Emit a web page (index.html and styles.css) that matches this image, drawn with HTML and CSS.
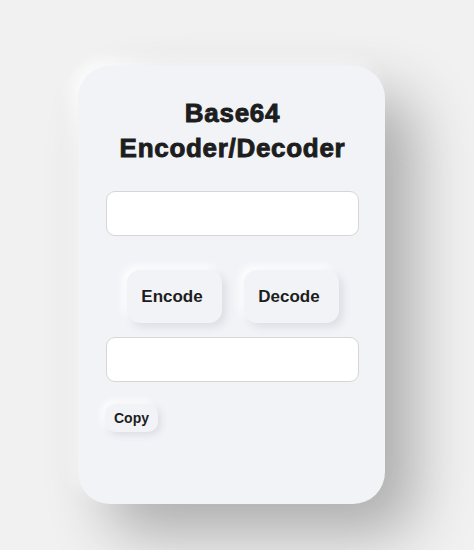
FILE: index.html
```html
<!DOCTYPE html>
<html>
<head>
<meta charset="utf-8">
<link rel="stylesheet" href="styles.css">
</head>
<body>
<div class="card">
  <h1 class="title">Base64<br>Encoder/Decoder</h1>
  <input class="field" type="text">
  <div class="actions">
    <button class="btn">Encode</button>
    <button class="btn">Decode</button>
  </div>
  <input class="field" type="text">
  <div class="copy-row">
    <button class="btn-copy">Copy</button>
  </div>
</div>
</body>
</html>
```
FILE: styles.css
```css
html, body {
  margin: 0;
  padding: 0;
}
body {
  background: #f1f1f1;
  font-family: "Liberation Sans", Arial, sans-serif;
  width: 474px;
  height: 550px;
  overflow: hidden;
}
.card {
  box-sizing: border-box;
  width: 307px;
  height: 438px;
  margin: 66px 0 0 78px;
  padding: 30px 26px 0 28px;
  background: #f2f3f7;
  border-radius: 32px;
  box-shadow: 30px 30px 60px #acacac, -6px -6px 16px #ffffff;
  display: flex;
  flex-direction: column;
}
.title {
  margin: 0;
  text-align: center;
  font-size: 26px;
  line-height: 35px;
  font-weight: 700;
  letter-spacing: 0.7px;
  -webkit-text-stroke: 0.9px #1d1d1d;
  color: #1d1d1d;
}
.field {
  box-sizing: border-box;
  width: 253px;
  height: 45px;
  margin: 25px 0 0 0;
  border: 1px solid #d6d6d6;
  border-radius: 9px;
  background: #ffffff;
  outline: none;
  padding: 0 10px;
}
.actions {
  display: flex;
  justify-content: center;
  gap: 22px;
  margin: 34px 0 14px 0;
}
.actions + .field {
  margin-top: 0;
}
.btn {
  width: 95px;
  height: 53px;
  border: none;
  border-radius: 13px;
  background: #f2f3f7;
  font-family: "Liberation Sans", Arial, sans-serif;
  font-size: 17px;
  font-weight: 700;
  color: #1d1d1d;
  box-shadow: 4px 4px 9px #dcdde3, -4px -4px 9px #ffffff;
  padding: 0 4px 0 0;
}
.copy-row {
  display: flex;
  margin-top: 22px;
}
.btn-copy {
  margin-left: -1px;
  width: 53px;
  height: 28px;
  border: none;
  border-radius: 10px;
  background: #f2f3f7;
  font-family: "Liberation Sans", Arial, sans-serif;
  font-size: 14px;
  font-weight: 700;
  color: #1d1d1d;
  box-shadow: 3px 3px 7px #dcdde3, -3px -3px 7px #ffffff;
  padding: 0;
}
```
